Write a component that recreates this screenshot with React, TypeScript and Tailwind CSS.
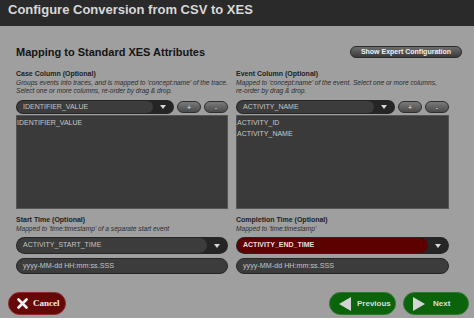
import React from 'react';

function Select({ value, red = false }: { value: string; red?: boolean }) {
  return (
    <div className="flex h-full flex-1 items-center rounded-full bg-[#252525] p-[1px]">
      <div
        className={`flex h-full flex-1 items-center rounded-full pl-[6px] text-[7px] ${
          red ? 'bg-[#5c0000] font-bold text-[#f0dede]' : 'bg-[#3c3c3c] text-[#c4c4c4]'
        }`}
      >
        {value}
      </div>
      <div className="flex w-[20px] items-center justify-center">
        <svg width="6" height="4" viewBox="0 0 6 4">
          <polygon points="0,0 6,0 3,4" fill="#d8d8d8" />
        </svg>
      </div>
    </div>
  );
}

function SmallButton({ label }: { label: string }) {
  return (
    <div className="flex h-[12px] w-[24px] items-center justify-center rounded-full border border-[#2e2e2e] bg-gradient-to-b from-[#7a7a7a] to-[#4c4c4c] text-[7px] leading-none text-[#e8e8e8]">
      {label}
    </div>
  );
}

function ListColumn({
  title,
  lines,
  value,
  items,
}: {
  title: string;
  lines: string[];
  value: string;
  items: string[];
}) {
  return (
    <div className="flex flex-col">
      <div className="text-[7px] font-bold leading-[10px] text-[#1e1e1e]">{title}</div>
      <div className="text-[6.6px] italic leading-[8px] text-[#2c2c2c]">
        {lines.map((l) => (
          <div key={l}>{l}</div>
        ))}
      </div>
      <div className="mt-[5px] flex h-[14px] items-center gap-[3px]">
        <Select value={value} />
        <SmallButton label="+" />
        <SmallButton label="-" />
      </div>
      <div className="mt-[1px] h-[94px] border border-[#555] bg-[#3a3a3a] pt-[1px] text-[7px] leading-[11px] text-[#c8c8c8]">
        {items.map((i) => (
          <div key={i}>{i}</div>
        ))}
      </div>
    </div>
  );
}

function TimeColumn({
  title,
  desc,
  value,
  red = false,
}: {
  title: string;
  desc: string;
  value: string;
  red?: boolean;
}) {
  return (
    <div className="flex flex-col">
      <div className="text-[7px] font-bold leading-[10px] text-[#1e1e1e]">{title}</div>
      <div className="text-[6.6px] italic leading-[8px] text-[#2c2c2c]">{desc}</div>
      <div className="mt-[4px] h-[17px]">
        <Select value={value} red={red} />
      </div>
      <div className="mt-[4px] flex h-[16px] items-center rounded-full border border-[#252525] bg-[#3c3c3c] pl-[6px] text-[7.2px] text-[#c4c4c4]">
        yyyy-MM-dd HH:mm:ss.SSS
      </div>
    </div>
  );
}

export default function App() {
  return (
    <div className="flex h-[318px] w-[474px] flex-col overflow-hidden bg-[#9f9f9f] font-['Liberation_Sans',Arial,sans-serif]">
      {/* Title bar */}
      <div className="h-[26px] shrink-0 bg-[#2a2a2a] pl-[8px] text-[13px] font-bold leading-[20px] text-[#d8d8d8]">
        Configure Conversion from CSV to XES
      </div>

      <div className="flex flex-1 flex-col px-[16px]">
        <div className="mr-[-4px] mt-[20px] flex h-[12px] items-center justify-between">
          <div className="text-[11px] font-bold leading-none text-[#141414]">
            Mapping to Standard XES Attributes
          </div>
          <div className="flex h-[12px] w-[112px] items-center justify-center rounded-full border border-[#2a2a2a] bg-gradient-to-b from-[#6e6e6e] to-[#3a3a3a] text-[7px] font-bold text-[#f0f0f0]">
            Show Expert Configuration
          </div>
        </div>

        <div className="mt-[11px] grid grid-cols-[212px_213px] gap-x-[8px]">
          <ListColumn
            title="Case Column (Optional)"
            lines={[
              "Groups events into traces, and is mapped to 'concept:name' of the trace.",
              'Select one or more columns, re-order by drag & drop.',
            ]}
            value="IDENTIFIER_VALUE"
            items={['IDENTIFIER_VALUE']}
          />
          <ListColumn
            title="Event Column (Optional)"
            lines={[
              "Mapped to 'concept:name' of the event. Select one or more columns,",
              're-order by drag & drop.',
            ]}
            value="ACTIVITY_NAME"
            items={['ACTIVITY_ID', 'ACTIVITY_NAME']}
          />
        </div>

        <div className="mt-[6px] grid grid-cols-[212px_213px] gap-x-[8px]">
          <TimeColumn
            title="Start Time (Optional)"
            desc="Mapped to 'time:timestamp' of a separate start event"
            value="ACTIVITY_START_TIME"
          />
          <TimeColumn
            title="Completion Time (Optional)"
            desc="Mapped to 'time:timestamp'"
            value="ACTIVITY_END_TIME"
            red
          />
        </div>
      </div>

      {/* Footer buttons */}
      <div className="mb-[3px] flex h-[23px] items-center pl-[8px] pr-[5px]">
        <div className="flex h-[23px] w-[58px] items-center gap-[5px] rounded-full border border-[#8a2a2a] bg-[#660808] pl-[8px]">
          <svg width="11" height="11" viewBox="0 0 11 11">
            <path d="M1.5 1.5 L9.5 9.5 M9.5 1.5 L1.5 9.5" stroke="#f2f2f2" strokeWidth="2.6" strokeLinecap="round" />
          </svg>
          <span className="font-['Liberation_Serif',serif] text-[9px] font-bold text-[#eeeeee]">Cancel</span>
        </div>
        <div className="flex-1" />
        <div className="flex h-[23px] w-[67px] items-center gap-[6px] rounded-full border border-[#2a7a2a] bg-[#0b640b] pl-[9px]">
          <svg width="12" height="14" viewBox="0 0 12 14">
            <polygon points="12,0 12,14 0,7" fill="#d4d4d4" />
          </svg>
          <span className="text-[8px] font-bold text-[#dcdcdc]">Previous</span>
        </div>
        <div className="ml-[7px] flex h-[23px] w-[66px] items-center gap-[8px] rounded-full border border-[#2a7a2a] bg-[#0b640b] pl-[9px]">
          <svg width="12" height="14" viewBox="0 0 12 14">
            <polygon points="0,0 0,14 12,7" fill="#d4d4d4" />
          </svg>
          <span className="text-[8px] font-bold text-[#dcdcdc]">Next</span>
        </div>
      </div>
    </div>
  );
}
